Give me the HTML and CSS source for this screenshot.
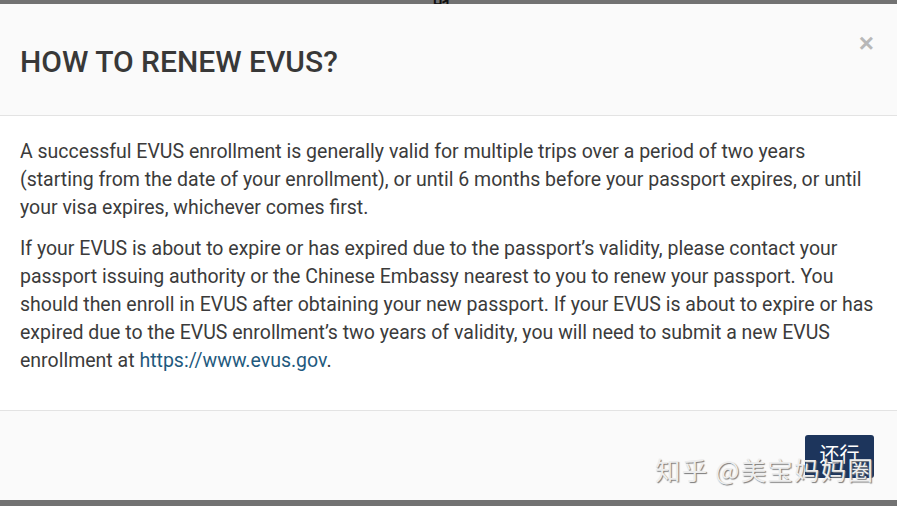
FILE: index.html
```
<!DOCTYPE html>
<html lang="zh-CN">

<head>
    <meta charset="UTF-8">
    <meta name="viewport" content="width=device-width, initial-scale=1.0">
    <title>How to renew EVUS</title>
    <link rel="stylesheet" href="styles.css">
</head>

<body>
    <div class="backdrop-text">叱</div>

    <div class="modal">
        <div class="modal-header">
            <h1>HOW TO RENEW EVUS?</h1>
            <button type="button" class="close">&times;</button>
        </div>
        <div class="modal-body">
            <p>A successful EVUS enrollment is generally valid for multiple trips over a period of two years (starting from the date of your enrollment), or until 6 months before your passport expires, or until your visa expires, whichever comes first.</p>
            <p>If your EVUS is about to expire or has expired due to the passport’s validity, please contact your passport issuing authority or the Chinese Embassy nearest to you to renew your passport. You should then enroll in EVUS after obtaining your new passport. If your EVUS is about to expire or has expired due to the EVUS enrollment’s two years of validity, you will need to submit a new EVUS enrollment at <a href="https://www.evus.gov">https://www.evus.gov</a>.</p>
        </div>
        <div class="modal-footer">
            <button type="button" class="btn btn-primary">还行</button>
        </div>
    </div>

    <div class="watermark">知乎 @美宝妈妈圈</div>
</body>

</html>
```

FILE: styles.css
```
:root {
    --dark: #333333;
    --light: #FFFFFF;
    --gray: #FAFAFA;
    --line: #E3E3E3;
    --navy: #1D355C;
    --link: #1F5A7E;
}

* {
    margin: 0;
    padding: 0;
    box-sizing: border-box;
}

body {
    font-family: Roboto, 'Noto Sans CJK SC', sans-serif;
    background-color: #727272;
    color: var(--dark);
    height: 100vh;
    overflow: hidden;
    position: relative;
    padding-top: 4px;
}

/* gray strip above the dialog, page underneath shows a bit */
.backdrop-text {
    position: absolute;
    top: -20px;
    left: 432px;
    font-size: 26px;
    color: #111;
}

.modal {
    position: relative;
    height: 496px;
    display: flex;
    flex-direction: column;
    background-color: var(--light);
}

.modal-header {
    height: 112px;
    padding: 0 20px;
    display: flex;
    align-items: center;
    justify-content: space-between;
    background-color: var(--gray);
    border-bottom: 1px solid var(--line);
}

.modal-header h1 {
    font-size: 30px;
    font-weight: 500;
    color: #383838;
    margin-top: 4px;
}

.close {
    align-self: flex-start;
    margin-top: 26px;
    margin-right: 3px;
    border: none;
    background: none;
    font-family: 'Liberation Sans', sans-serif;
    font-size: 26px;
    font-weight: 700;
    line-height: 1;
    color: #B8B8B8;
    cursor: pointer;
}

.modal-body {
    height: 295px;
    padding: 22px 20px 0;
    background-color: var(--light);
    border-bottom: 1px solid var(--line);
}

.modal-body p {
    font-size: 19.5px;
    line-height: 28px;
    color: #3B3B3B;
    margin-bottom: 13px;
}

a {
    text-decoration: none;
    color: var(--link);
}

.modal-footer {
    flex: 1;
    padding: 24px 23px 0;
    display: flex;
    justify-content: flex-end;
    align-items: flex-start;
    background-color: var(--gray);
}

.btn {
    width: 69px;
    height: 43px;
    border: none;
    border-radius: 3px;
    font-family: 'Noto Sans CJK SC', sans-serif;
    font-size: 20px;
    line-height: 1;
    padding-bottom: 6px;
    cursor: pointer;
}

.btn-primary {
    background-color: var(--navy);
    color: var(--light);
}

.watermark {
    position: absolute;
    left: 655px;
    top: 450px;
    font-family: 'Noto Sans CJK SC', sans-serif;
    font-size: 25.5px;
    letter-spacing: 1.2px;
    color: #EDEDED;
    text-shadow: 1px 1px 1px #7A7A7A;
}
```
